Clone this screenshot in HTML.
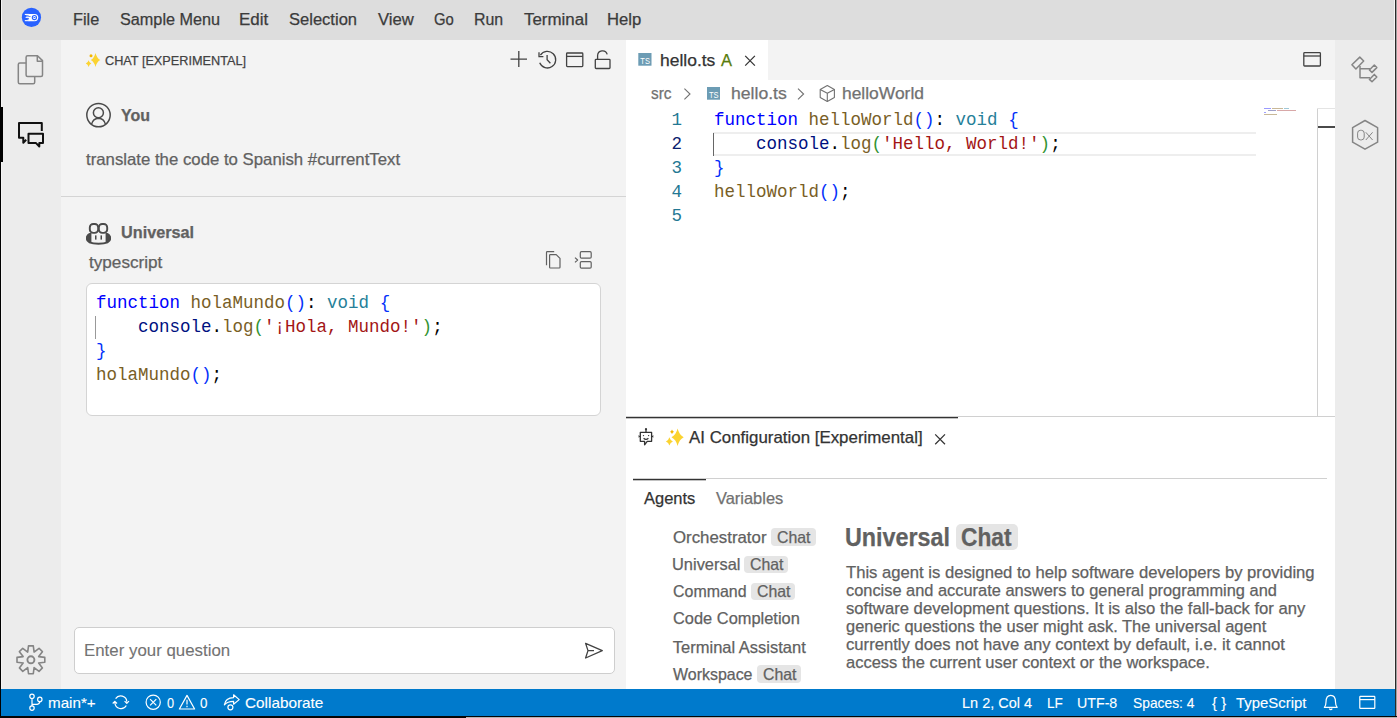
<!DOCTYPE html>
<html><head><meta charset="utf-8">
<style>
*{box-sizing:border-box;margin:0;padding:0}
html,body{width:1397px;height:718px;overflow:hidden;background:#f3f3f3;font-family:"Liberation Sans",sans-serif;color:#616161}
.a{position:absolute}
.t{position:absolute;white-space:pre;line-height:1;transform-origin:0 50%;-webkit-text-stroke:0.25px currentColor}
.m{font-family:"Liberation Mono",monospace;white-space:pre;position:absolute;line-height:24px;font-size:17.5px}
svg{position:absolute;overflow:visible}
/* code colors */
.kw{color:#0000ff}.fn{color:#795e26}.ty{color:#267f99}.b1{color:#0431fa}.b2{color:#319331}.st{color:#a31515}.va{color:#001080}.pl{color:#000}
</style></head>
<body>
<!-- borders -->
<div class="a" style="left:0;top:0;width:1px;height:718px;background:#000"></div>

<!-- menubar -->
<div class="a" style="left:1px;top:0;width:1394px;height:40px;background:#dddddd"></div>


<!-- left activity bar -->
<div class="a" style="left:1px;top:40px;width:60px;height:649px;background:#ececec"></div>
<div class="a" style="left:0;top:107px;width:3px;height:55px;background:#000"></div>

<!-- chat panel -->
<div class="a" style="left:61px;top:40px;width:565px;height:649px;background:#f3f3f3"></div>
<div class="a" style="left:61px;top:196px;width:565px;height:1px;background:#d4d4d4"></div>

<!-- code box -->
<div class="a" style="left:86px;top:283px;width:515px;height:133px;background:#fff;border:1px solid #d4d4d4;border-radius:6px"></div>

<!-- chat input -->
<div class="a" style="left:74px;top:627px;width:541px;height:47px;background:#fff;border:1px solid #cecece;border-radius:5px"></div>

<!-- editor -->
<div class="a" style="left:626px;top:40px;width:709px;height:40px;background:#f3f3f3"></div>
<div class="a" style="left:626px;top:40px;width:142px;height:40px;background:#fff"></div>
<div class="a" style="left:626px;top:80px;width:709px;height:337px;background:#fff"></div>
<div class="a" style="left:713px;top:132px;width:543px;height:24px;border:2px solid #eeeeee;border-left:0;border-right:0"></div>
<div class="a" style="left:713px;top:132.5px;width:1.2px;height:23px;background:#666"></div>
<div class="a" style="left:1317px;top:108px;width:1px;height:309px;background:#d0d0d0"></div>
<div class="a" style="left:1318px;top:125.5px;width:17px;height:2px;background:#4a4a4a"></div>

<!-- bottom panel -->
<div class="a" style="left:626px;top:417px;width:709px;height:272px;background:#fff"></div>
<div class="a" style="left:626px;top:416px;width:709px;height:1px;background:#d0d0d0"></div>
<div class="a" style="left:626px;top:417px;width:332px;height:1px;background:#333;box-shadow:0 0.6px 0 rgba(51,51,51,.5)"></div>
<div class="a" style="left:633px;top:478px;width:694px;height:1px;background:#d0d0d0"></div>
<div class="a" style="left:633px;top:479px;width:73px;height:1px;background:#333;box-shadow:0 0.6px 0 rgba(51,51,51,.5)"></div>

<!-- right activity bar -->
<div class="a" style="left:1335px;top:40px;width:60px;height:649px;background:#ececec"></div>
<div class="a" style="left:1394px;top:0;width:1px;height:689px;background:#f6f6f6"></div>
<div class="a" style="left:1395px;top:0;width:1px;height:718px;background:#2a2a2a"></div>
<div class="a" style="left:1396px;top:0;width:1px;height:718px;background:#a0a0a0"></div>

<!-- status bar -->
<div class="a" style="left:1px;top:689px;width:1394px;height:27px;background:#007acc"></div>
<div class="a" style="left:0;top:716px;width:1397px;height:2px;background:#050505"></div>
<div class="a" style="left:466px;top:717px;width:931px;height:1px;background:#b4b4b4"></div>
<div class="a" style="left:1px;top:0;width:1px;height:107px;background:#f4f4f4"></div>
<div class="a" style="left:1px;top:162px;width:1px;height:527px;background:#f4f4f4"></div>


<!-- badges -->
<div class="a" style="left:771px;top:528.3px;width:44.8px;height:17.4px;background:#e5e5e5;border-radius:4px"></div>
<div class="a" style="left:744.3px;top:555.5px;width:43.3px;height:17.4px;background:#e5e5e5;border-radius:4px"></div>
<div class="a" style="left:751.4px;top:582.8px;width:43.3px;height:17.4px;background:#e5e5e5;border-radius:4px"></div>
<div class="a" style="left:757.3px;top:665.2px;width:43.3px;height:17.4px;background:#e5e5e5;border-radius:4px"></div>
<div class="a" style="left:956px;top:524px;width:61.8px;height:25.8px;background:#e5e5e5;border-radius:5px"></div>
<!-- editor code -->
<div class="m" style="left:640px;top:108.0px;width:42px;text-align:right;color:#237893">1
<span style="color:#0b216f">2</span>
3
4
5</div>
<div class="m" style="left:714px;top:108.0px"><span class="kw">function</span> <span class="fn">helloWorld</span><span class="b1">()</span><span class="pl">:</span> <span class="ty">void</span> <span class="b1">{</span>
    <span class="va">console</span><span class="pl">.</span><span class="fn">log</span><span class="b2">(</span><span class="st">'Hello, World!'</span><span class="b2">)</span><span class="pl">;</span>
<span class="b1">}</span>
<span class="fn">helloWorld</span><span class="b1">()</span><span class="pl">;</span></div>
<!-- chat code -->
<div class="m" style="left:96px;top:290.8px"><span class="kw">function</span> <span class="fn">holaMundo</span><span class="b1">()</span><span class="pl">:</span> <span class="ty">void</span> <span class="b1">{</span>
    <span class="va">console</span><span class="pl">.</span><span class="fn">log</span><span class="b2">(</span><span class="st">'¡Hola, Mundo!'</span><span class="b2">)</span><span class="pl">;</span>
<span class="b1">}</span>
<span class="fn">holaMundo</span><span class="b1">()</span><span class="pl">;</span></div>
<div class="a" style="left:95px;top:316px;width:1px;height:23px;background:#999"></div>
<!-- minimap -->
<div class="a" style="left:1264px;top:108px;width:7px;height:1px;background:#9a9aff"></div>
<div class="a" style="left:1272px;top:108px;width:11px;height:1px;background:#c8b898"></div>
<div class="a" style="left:1284px;top:108px;width:5px;height:1px;background:#a0c8d8"></div>
<div class="a" style="left:1268px;top:110px;width:8px;height:1px;background:#a0a0c8"></div>
<div class="a" style="left:1277px;top:110px;width:19px;height:1px;background:#d8a8a8"></div>
<div class="a" style="left:1264px;top:112px;width:2px;height:1px;background:#a0a0ff"></div>
<div class="a" style="left:1264px;top:114px;width:13px;height:1px;background:#c8b898"></div>
<div class="a" style="left:1317px;top:108px;width:18px;height:1px;background:#e4e4e4"></div>

<div class="t" style="left:72.98px;top:12.46px;font-size:16px;color:#3b3b3b;transform:scaleX(1.0168);">File</div>
<div class="t" style="left:120.10px;top:12.46px;font-size:16px;color:#3b3b3b;transform:scaleX(1.0141);">Sample Menu</div>
<div class="t" style="left:238.94px;top:12.46px;font-size:16px;color:#3b3b3b;transform:scaleX(1.0581);">Edit</div>
<div class="t" style="left:289.30px;top:12.46px;font-size:16px;color:#3b3b3b;transform:scaleX(1.0335);">Selection</div>
<div class="t" style="left:377.50px;top:12.46px;font-size:16px;color:#3b3b3b;transform:scaleX(1.0420);">View</div>
<div class="t" style="left:434.20px;top:12.46px;font-size:16px;color:#3b3b3b;transform:scaleX(0.9279);">Go</div>
<div class="t" style="left:474.21px;top:12.46px;font-size:16px;color:#3b3b3b;transform:scaleX(0.9944);">Run</div>
<div class="t" style="left:524.00px;top:12.46px;font-size:16px;color:#3b3b3b;transform:scaleX(1.0567);">Terminal</div>
<div class="t" style="left:606.66px;top:12.46px;font-size:16px;color:#3b3b3b;transform:scaleX(1.0404);">Help</div>
<div class="t" style="left:105.20px;top:53.67px;font-size:13.5px;color:#424242;transform:scaleX(0.9397);">CHAT [EXPERIMENTAL]</div>
<div class="t" style="left:121.00px;top:107.23px;font-size:16.5px;color:#616161;font-weight:bold;transform:scaleX(0.9702);">You</div>
<div class="t" style="left:86.00px;top:151.23px;font-size:16.5px;color:#616161;transform:scaleX(1.0161);">translate the code to Spanish #currentText</div>
<div class="t" style="left:121.00px;top:223.53px;font-size:16.5px;color:#616161;font-weight:bold;transform:scaleX(0.9836);">Universal</div>
<div class="t" style="left:88.70px;top:254.03px;font-size:16.5px;color:#616161;transform:scaleX(1.0391);">typescript</div>
<div class="t" style="left:84.48px;top:641.83px;font-size:16.5px;color:#737373;transform:scaleX(1.0218);-webkit-text-stroke:0.1px currentColor;">Enter your question</div>
<div class="t" style="left:659.94px;top:52.03px;font-size:16.5px;color:#333333;transform:scaleX(1.0582);">hello.ts</div>
<div class="t" style="left:721.00px;top:52.03px;font-size:16.5px;color:#587c0c;">A</div>
<div class="t" style="left:651.00px;top:85.96px;font-size:16px;color:#717171;transform:scaleX(0.9612);">src</div>
<div class="t" style="left:731.00px;top:85.96px;font-size:16px;color:#717171;transform:scaleX(1.1007);">hello.ts</div>
<div class="t" style="left:841.81px;top:85.96px;font-size:16px;color:#717171;transform:scaleX(1.0886);">helloWorld</div>
<div class="t" style="left:689.00px;top:429.03px;font-size:16.5px;color:#333333;transform:scaleX(1.0229);">AI Configuration [Experimental]</div>
<div class="t" style="left:644.00px;top:490.03px;font-size:16.5px;color:#333333;">Agents</div>
<div class="t" style="left:716.00px;top:490.03px;font-size:16.5px;color:#717171;transform:scaleX(0.9954);">Variables</div>
<div class="t" style="left:672.80px;top:528.93px;font-size:16.5px;color:#616161;transform:scaleX(1.0195);">Orchestrator</div>
<div class="t" style="left:671.80px;top:555.63px;font-size:16.5px;color:#616161;transform:scaleX(0.9954);">Universal</div>
<div class="t" style="left:672.80px;top:583.23px;font-size:16.5px;color:#616161;transform:scaleX(0.9666);">Command</div>
<div class="t" style="left:672.80px;top:610.43px;font-size:16.5px;color:#616161;transform:scaleX(0.9944);">Code Completion</div>
<div class="t" style="left:672.80px;top:638.93px;font-size:16.5px;color:#616161;">Terminal Assistant</div>
<div class="t" style="left:672.80px;top:665.63px;font-size:16.5px;color:#616161;transform:scaleX(0.9665);">Workspace</div>
<div class="t" style="left:776.70px;top:528.93px;font-size:16.5px;color:#616161;transform:scaleX(0.9612);">Chat</div>
<div class="t" style="left:749.50px;top:555.63px;font-size:16.5px;color:#616161;transform:scaleX(0.9612);">Chat</div>
<div class="t" style="left:756.80px;top:583.23px;font-size:16.5px;color:#616161;transform:scaleX(0.9612);">Chat</div>
<div class="t" style="left:762.70px;top:665.63px;font-size:16.5px;color:#616161;transform:scaleX(0.9612);">Chat</div>
<div class="t" style="left:845.49px;top:524.53px;font-size:25.6px;color:#616161;font-weight:bold;transform:scaleX(0.9114);">Universal</div>
<div class="t" style="left:960.81px;top:524.53px;font-size:25.6px;color:#616161;font-weight:bold;transform:scaleX(0.8891);">Chat</div>
<div class="t" style="left:846.00px;top:564.20px;font-size:16.3px;color:#616161;transform:scaleX(1.0212);">This agent is designed to help software developers by providing</div>
<div class="t" style="left:846.00px;top:582.24px;font-size:16.3px;color:#616161;transform:scaleX(1.0065);">concise and accurate answers to general programming and</div>
<div class="t" style="left:846.00px;top:600.28px;font-size:16.3px;color:#616161;transform:scaleX(1.0235);">software development questions. It is also the fall-back for any</div>
<div class="t" style="left:846.00px;top:618.32px;font-size:16.3px;color:#616161;transform:scaleX(1.0079);">generic questions the user might ask. The universal agent</div>
<div class="t" style="left:846.00px;top:636.36px;font-size:16.3px;color:#616161;transform:scaleX(1.0231);">currently does not have any context by default, i.e. it cannot</div>
<div class="t" style="left:846.00px;top:654.40px;font-size:16.3px;color:#616161;transform:scaleX(1.0127);">access the current user context or the workspace.</div>
<div class="t" style="left:48.49px;top:695.30px;font-size:15px;color:#ffffff;transform:scaleX(1.0119);-webkit-text-stroke:0.12px currentColor;">main*+</div>
<div class="t" style="left:166.50px;top:695.30px;font-size:15px;color:#ffffff;transform:scaleX(0.8500);-webkit-text-stroke:0.12px currentColor;">0</div>
<div class="t" style="left:199.60px;top:695.30px;font-size:15px;color:#ffffff;transform:scaleX(0.8875);-webkit-text-stroke:0.12px currentColor;">0</div>
<div class="t" style="left:245.00px;top:695.30px;font-size:15px;color:#ffffff;transform:scaleX(1.0213);-webkit-text-stroke:0.12px currentColor;">Collaborate</div>
<div class="t" style="left:962.03px;top:695.30px;font-size:15px;color:#ffffff;transform:scaleX(0.9662);-webkit-text-stroke:0.12px currentColor;">Ln 2, Col 4</div>
<div class="t" style="left:1046.89px;top:695.30px;font-size:15px;color:#ffffff;transform:scaleX(0.9056);-webkit-text-stroke:0.12px currentColor;">LF</div>
<div class="t" style="left:1077.35px;top:695.30px;font-size:15px;color:#ffffff;transform:scaleX(0.9477);-webkit-text-stroke:0.12px currentColor;">UTF-8</div>
<div class="t" style="left:1133.40px;top:695.30px;font-size:15px;color:#ffffff;transform:scaleX(0.9206);-webkit-text-stroke:0.12px currentColor;">Spaces: 4</div>
<div class="t" style="left:1211.50px;top:695.30px;font-size:15px;color:#ffffff;transform:scaleX(0.9946);-webkit-text-stroke:0.12px currentColor;">{ }</div>
<div class="t" style="left:1236.00px;top:695.30px;font-size:15px;color:#ffffff;transform:scaleX(0.9931);-webkit-text-stroke:0.12px currentColor;">TypeScript</div>
<svg width="1397" height="718" viewBox="0 0 1397 718" style="left:0;top:0" fill="none">
<!-- theia logo -->
<circle cx="31.45" cy="17.4" r="9.6" fill="#2962ff"/>
<path d="M28.6 13.9 H34.6 A3.65 3.65 0 0 1 34.6 21.2 H28.6 Z" fill="#fff"/>
<rect x="24.8" y="13.9" width="4.5" height="1.1" fill="#fff"/>
<rect x="26.3" y="15.6" width="3" height="0.9" fill="#fff"/>
<rect x="25.6" y="17.1" width="3.6" height="0.9" fill="#fff"/>
<rect x="27.6" y="18.6" width="1.7" height="0.9" fill="#fff"/>
<rect x="24.8" y="20.1" width="4.5" height="1.1" fill="#fff"/>
<rect x="28.4" y="16.2" width="2.2" height="0.7" fill="#2962ff"/>
<rect x="27.5" y="18.3" width="1.4" height="0.8" fill="#2962ff"/>
<circle cx="34.4" cy="17.55" r="2.1" fill="none" stroke="#2962ff" stroke-width="1.1"/>
<rect x="33.5" y="17.1" width="1.8" height="0.9" fill="#2962ff"/>
<!-- files icon -->
<g stroke="#858585" stroke-width="1.5" stroke-linejoin="round">
<path d="M27.6 55.8 H37.5 L42.5 60.6 V75.1 Q42.5 76.6 41 76.6 H27.6 Q26.1 76.6 26.1 75.1 V57.3 Q26.1 55.8 27.6 55.8 Z"/>
<path d="M37.3 55.8 V61.2 H42.5"/>
<path d="M26.1 63 H19.8 Q18.3 63 18.3 64.5 V82.3 Q18.3 83.8 19.8 83.8 H33.2 Q34.7 83.8 34.7 82.3 V76.6"/>
</g>
<!-- chat icon -->
<g stroke="#111" stroke-width="2" stroke-linejoin="round">
<path d="M41.8 131 V123 H19 V137.7 H23.3 V142.8 L26.2 139.8"/>
<path d="M28.5 133.8 H43 V142.9 H39.3 V146.5 L35.8 142.9 H28.5 Z"/>
</g>
<!-- gear -->
<g stroke="#858585" stroke-width="1.6" stroke-linejoin="round">
<path d="M28.51 645.90 L33.29 645.90 L34.11 652.04 L39.04 648.29 L42.41 651.66 L38.66 656.59 L44.80 657.41 L44.80 662.19 L38.66 663.01 L42.41 667.94 L39.04 671.31 L34.11 667.56 L33.29 673.70 L28.51 673.70 L27.69 667.56 L22.76 671.31 L19.39 667.94 L23.14 663.01 L17.00 662.19 L17.00 657.41 L23.14 656.59 L19.39 651.66 L22.76 648.29 L27.69 652.04 Z"/>
<circle cx="30.9" cy="659.8" r="3.5" stroke-width="1.9"/>
</g>
<!-- chat toolbar -->
<g stroke="#424242" stroke-width="1.3">
<path d="M510.5 59.2 H527 M518.8 51 V67"/>
<path d="M540.4 55.2 A8.3 8.3 0 1 1 539.7 62.8"/>
<path d="M539 52.3 V56.6 H543.4"/>
<path d="M547.1 55 V59.8 L550.4 63.3"/>
<rect x="566.6" y="53" width="16.2" height="13.6" rx="0.8"/>
<path d="M566.6 56.4 H582.8"/>
<rect x="595.3" y="59.3" width="14.7" height="9.2" rx="0.8"/>
<path d="M597.6 59.3 V55.6 A4.9 4.9 0 0 1 607.2 54.4"/>
</g>
<!-- sparkles header -->
<g fill="#fbd331">
<path d="M95.50 53.10 Q96.75 58.28 100.30 60.10 Q96.75 61.92 95.50 67.10 Q94.25 61.92 90.70 60.10 Q94.25 58.28 95.50 53.10Z"/>
<path d="M88.60 60.20 Q89.27 62.78 91.40 63.60 Q89.27 64.42 88.60 67.00 Q87.93 64.42 85.80 63.60 Q87.93 62.78 88.60 60.20Z"/>
<circle cx="91" cy="55.7" r="1.5" fill="#f3b600"/>
</g>
<!-- user icon -->
<g stroke="#4a4a4a" stroke-width="1.5">
<circle cx="98.5" cy="115.1" r="11.7"/>
<circle cx="98.4" cy="112.8" r="5"/>
<path d="M91.4 124.6 Q93 118.5 98.5 118.3 Q104 118.5 105.6 124.6"/>
</g>
<!-- universal (copilot) icon -->
<g stroke="#4a4a4a" stroke-width="1.9" stroke-linejoin="round">
<rect x="89.8" y="224" width="8.4" height="8.9" rx="3.4"/>
<rect x="98.8" y="224" width="8.4" height="8.9" rx="3.4"/>
<path d="M90.8 233.6 Q86.9 234.8 86.9 238.8 Q86.9 243.8 98.5 243.8 Q110.1 243.8 110.1 238.8 Q110.1 234.8 106.2 233.6"/>
</g>
<path d="M86 238.5 Q86 234.2 90 233 L91.4 233 V242.6 Q86 241.5 86 238.5 Z M111 238.5 Q111 234.2 107 233 L105.6 233 V242.6 Q111 241.5 111 238.5 Z" fill="#4a4a4a"/>
<rect x="95" y="235.4" width="1.5" height="4.2" fill="#4a4a4a"/>
<rect x="100.5" y="235.4" width="1.5" height="4.2" fill="#4a4a4a"/>
<!-- copy / insert icons -->
<g stroke="#616161" stroke-width="1.2" stroke-linejoin="round">
<path d="M546.5 265.3 V252.5 Q546.5 251.7 547.3 251.7 H554.2"/>
<path d="M549.6 255.3 Q549.6 254.6 550.4 254.6 H556.2 L560 258.4 V267.2 Q560 268 559.2 268 H550.4 Q549.6 268 549.6 267.2 Z"/>
<path d="M575 257.6 L577.6 260 L575 262.4"/>
<rect x="580.3" y="251.7" width="10.9" height="6.5" rx="1.2"/>
<rect x="580.3" y="261.6" width="10.9" height="6.5" rx="1.2"/>
</g>
<!-- send icon -->
<path d="M585.6 643.4 L602.3 650.6 L585.6 658 L588 650.6 Z M588 650.6 H594" stroke="#424242" stroke-width="1.3" stroke-linejoin="round"/>
<!-- TS icons -->
<rect x="638.3" y="53" width="13.2" height="12.7" fill="#6c9cb4"/>
<text x="640.3" y="64.2" font-family="Liberation Sans" font-size="8.6" fill="#fff" textLength="9.6" lengthAdjust="spacingAndGlyphs">TS</text>
<rect x="707" y="87" width="13" height="12.7" fill="#6c9cb4"/>
<text x="709" y="98.2" font-family="Liberation Sans" font-size="8.6" fill="#fff" textLength="9.6" lengthAdjust="spacingAndGlyphs">TS</text>
<!-- tab close -->
<path d="M745.2 55.9 L754.9 65.6 M754.9 55.9 L745.2 65.6" stroke="#333" stroke-width="1.25"/>
<!-- window icon top right -->
<g stroke="#424242" stroke-width="1.3">
<rect x="1303.8" y="52.6" width="16.6" height="13.4" rx="0.8"/>
<path d="M1303.8 56 H1320.4"/>
</g>
<!-- breadcrumb chevrons -->
<g stroke="#717171" stroke-width="1.1">
<path d="M684.4 88.6 L690 94 L684.4 99.4"/>
<path d="M798 88.6 L803.6 94 L798 99.4"/>
</g>
<!-- cube -->
<g stroke="#717171" stroke-width="1.1" stroke-linejoin="round">
<path d="M827.3 85.6 L834.4 89.4 V97.6 L827.3 101.4 L820.2 97.6 V89.4 Z"/>
<path d="M820.2 89.4 L827.3 93.3 L834.4 89.4 M827.3 93.3 V101.4"/>
</g>
<!-- right bar icons -->
<g stroke="#858585" stroke-width="1.5" stroke-linejoin="round">
<path d="M1351.9 64.7 L1359.8 57.1 L1363.7 61 L1355.9 69 Z"/>
<path d="M1360 66 V77.8 H1370 M1360 68.8 H1370"/>
<path d="M1369.4 70 L1374.3 65 L1376.8 67.6 L1372 72.4 Z"/>
<path d="M1369.4 79.4 L1374.3 74.4 L1376.8 77 L1372 81.8 Z"/>
<path d="M1365 120.5 L1377.6 127.6 V142.2 L1365 149.2 L1352.6 142.2 V127.6 Z"/>
</g>
<g stroke="#858585" stroke-width="1">
<rect x="1357.6" y="130.3" width="6.6" height="9.6" rx="2.8"/>
<path d="M1365.8 132.3 L1372.6 140 M1372.6 132.3 L1365.8 140"/>
</g>
<!-- AI config bot icon -->
<g stroke="#333" stroke-width="1.3" stroke-linejoin="round">
<path d="M640.3 432.4 H651.6 V441.3 H647.2 L644.6 444.8 V441.3 H640.3 Z"/>
<path d="M646 432.4 V429.5"/>
<path d="M643.6 438.3 Q646 440.4 648.4 438.3"/>
</g>
<circle cx="646" cy="429.2" r="1.1" fill="#333"/>
<path d="M638.6 435 L640.3 436.4 L638.6 437.8 Z M653.3 435 L651.6 436.4 L653.3 437.8 Z" fill="#333"/>
<circle cx="643.5" cy="435.6" r="0.7" fill="#333"/><circle cx="648.6" cy="435.6" r="0.7" fill="#333"/>
<!-- sparkles ai config -->
<g fill="#fbd331">
<path d="M677.60 428.60 Q679.19 435.04 683.70 437.30 Q679.19 439.56 677.60 446.00 Q676.01 439.56 671.50 437.30 Q676.01 435.04 677.60 428.60Z"/>
<path d="M669.40 437.30 Q670.24 440.42 672.90 441.40 Q670.24 442.38 669.40 445.50 Q668.56 442.38 665.90 441.40 Q668.56 440.42 669.40 437.30Z"/>
<path d="M672.00 429.40 Q672.60 431.01 674.00 431.70 Q672.60 432.39 672.00 434.00 Q671.40 432.39 670.00 431.70 Q671.40 431.01 672.00 429.40Z" fill="#f3b600"/>
</g>
<!-- config close -->
<path d="M935.2 434.4 L945 444.2 M945 434.4 L935.2 444.2" stroke="#333" stroke-width="1.25"/>
<!-- status bar icons -->
<g stroke="#fff" stroke-width="1.2" fill="none" stroke-linejoin="round">
<circle cx="32" cy="696.3" r="2.2"/>
<circle cx="32" cy="708.1" r="2.2"/>
<circle cx="39.8" cy="699.4" r="2.2"/>
<path d="M32 698.5 V705.9 M32 704.3 H37.2 Q39.8 704 39.8 701.6"/>
<path d="M115.6 698.6 A6.1 6.1 0 0 1 126.8 701.8"/>
<path d="M124.6 701.1 L126.8 703.3 L129 701.1"/>
<path d="M126.3 705.5 A6.1 6.1 0 0 1 114.9 703"/>
<path d="M112.7 703.5 L114.8 701.3 L117 703.5"/>
<circle cx="153.2" cy="702.2" r="7.1"/>
<path d="M150.1 699.1 L156.3 705.3 M156.3 699.1 L150.1 705.3"/>
<path d="M187 695.4 L194.6 709 H179.4 Z"/>
<path d="M187 699.8 V704.4 M187 705.8 V707.2"/>
<path d="M224.4 704.8 Q225.5 697.6 233.6 697.6 V694.8 L239.2 699.6 L233.6 704.2 V701.4 Q227.5 701.4 224.4 704.8 Z"/>
<circle cx="230.4" cy="707.3" r="2.5"/>
<path d="M1330.7 707.4 H1324.4 Q1326 705.5 1326 702 Q1326 695.4 1330.8 695.4 Q1335.5 695.4 1335.5 702 Q1335.5 705.5 1337.2 707.4 Z M1329.3 708.6 Q1330.8 710.6 1332.3 708.6"/>
<rect x="1359.8" y="696.4" width="15" height="12" rx="0.6"/>
<path d="M1359.8 699.6 H1374.8"/>
</g>
</svg>

</body></html>
